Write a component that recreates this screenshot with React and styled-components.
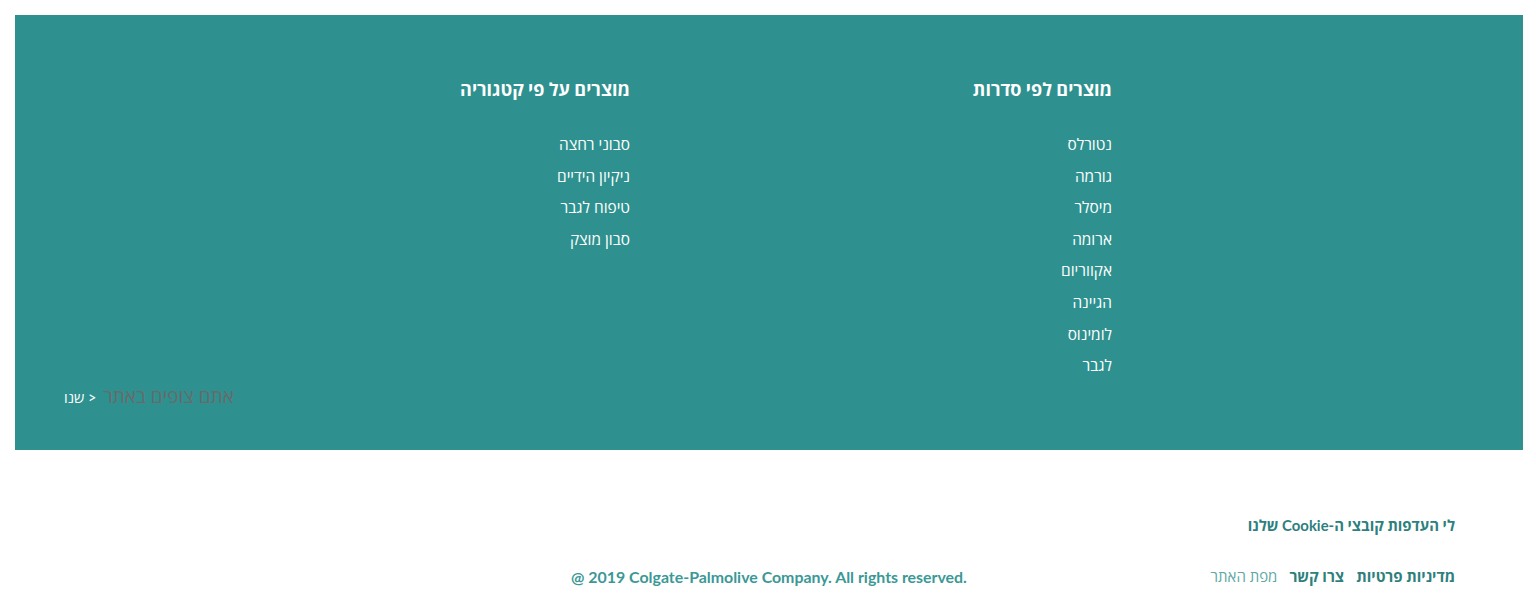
import React from 'react';
import styled, { createGlobalStyle } from 'styled-components';

const GlobalStyle = createGlobalStyle`
    body {
        margin: 0;
        background: #fff;
        font-family: Lato, "Open Sans", "Noto Sans", sans-serif;
    }
`;

const Page = styled.div`
    direction: rtl;
    padding: 15px 13px 0 15px;
`;

const Panel = styled.div`
    background: #2e918f;
    padding: 62px 411px 41px 49px;
    color: #fff;
`;

const Columns = styled.div`
    display: flex;
`;

const Column = styled.div`
    width: ${(p) => p.width}px;
    display: flex;
    flex-direction: column;
`;

const ColumnTitle = styled.h3`
    margin: 0 0 32px;
    font-size: 18px;
    font-weight: 700;
    line-height: 24px;
`;

const LinkList = styled.ul`
    list-style: none;
    margin: 0;
    padding: 0;
    display: flex;
    flex-direction: column;
    gap: 9.6px;
`;

const LinkItem = styled.li`
    font-size: 15.4px;
    line-height: 22px;
`;

const Breadcrumb = styled.div`
    margin-top: 7px;
    display: flex;
    justify-content: flex-end;
    align-items: baseline;
    gap: 7px;
`;

const Current = styled.span`
    color: #6a6a6a;
    font-size: 19px;
`;

const Crumb = styled.span`
    color: #fff;
    font-size: 14.5px;
`;

const Footer = styled.div`
    padding: 65px 68px 0 68px;
`;

const Cookie = styled.a`
    display: block;
    color: #2e7f7d;
    font-size: 14.9px;
    font-weight: 700;
    line-height: 20px;
`;

const BottomRow = styled.div`
    margin-top: 31px;
    display: grid;
    grid-template-columns: 1fr auto 1fr;
    align-items: center;
`;

const NavLinks = styled.div`
    display: flex;
    gap: 12px;
    align-items: center;
`;

const NavLink = styled.a`
    color: ${(p) => (p.muted ? '#5fa8a6' : '#2e7f7d')};
    font-weight: ${(p) => (p.muted ? 400 : 700)};
    font-size: 15px;
    line-height: 20px;
`;

const Copyright = styled.div`
    direction: ltr;
    color: #3b9896;
    font-size: 15.9px;
    font-weight: 700;
`;

const series = ['נטורלס', 'גורמה', 'מיסלר', 'ארומה', 'אקווריום', 'הגיינה', 'לומינוס', 'לגבר'];
const categories = ['סבוני רחצה', 'ניקיון הידיים', 'טיפוח לגבר', 'סבון מוצק'];

export default function App() {
    return (
        <>
            <GlobalStyle />
            <Page>
                <Panel>
                    <Columns>
                        <Column width={482}>
                            <ColumnTitle>מוצרים לפי סדרות</ColumnTitle>
                            <LinkList>
                                {series.map((s) => (
                                    <LinkItem key={s}>{s}</LinkItem>
                                ))}
                            </LinkList>
                        </Column>
                        <Column width={300}>
                            <ColumnTitle>מוצרים על פי קטגוריה</ColumnTitle>
                            <LinkList>
                                {categories.map((s) => (
                                    <LinkItem key={s}>{s}</LinkItem>
                                ))}
                            </LinkList>
                        </Column>
                    </Columns>
                    <Breadcrumb>
                        <Current>אתם צופים באתר</Current>
                        <Crumb>&lt; שנו</Crumb>
                    </Breadcrumb>
                </Panel>
                <Footer>
                    <Cookie>לי העדפות קובצי ה-Cookie שלנו</Cookie>
                    <BottomRow>
                        <NavLinks>
                            <NavLink>מדיניות פרטיות</NavLink>
                            <NavLink>צרו קשר</NavLink>
                            <NavLink muted>מפת האתר</NavLink>
                        </NavLinks>
                        <Copyright>@ 2019 Colgate-Palmolive Company. All rights reserved.</Copyright>
                        <div />
                    </BottomRow>
                </Footer>
            </Page>
        </>
    );
}
